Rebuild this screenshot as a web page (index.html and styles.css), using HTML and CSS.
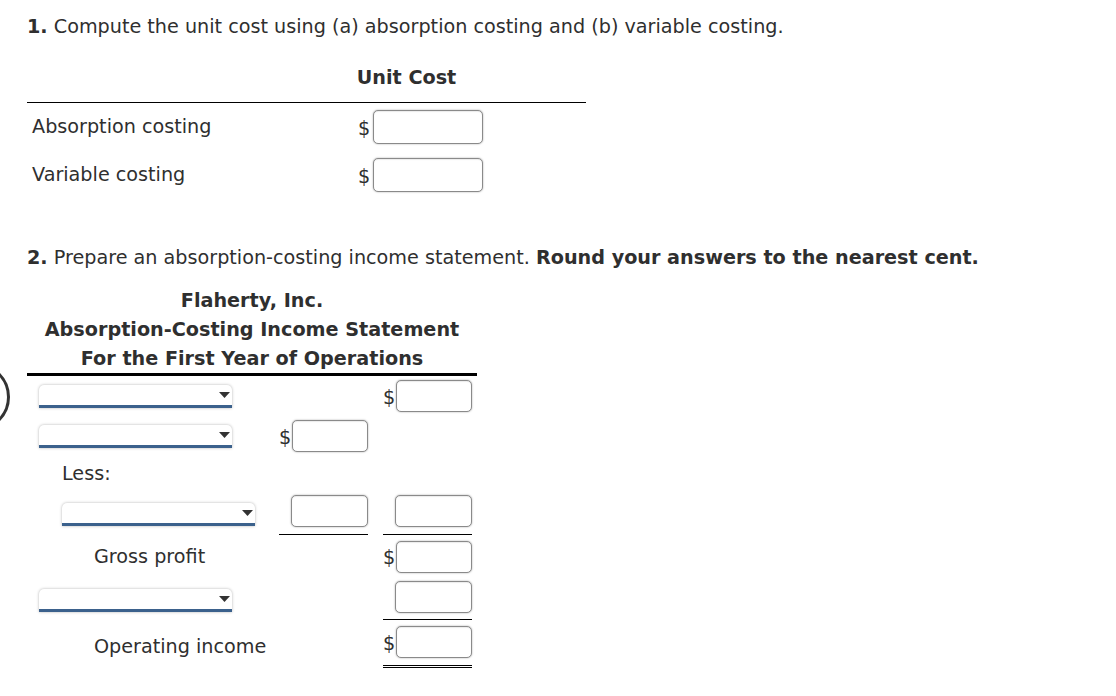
FILE: index.html
```html
<!DOCTYPE html>
<html>
<head>
<meta charset="utf-8">
<link rel="stylesheet" href="styles.css">
</head>
<body>
<div class="page">
  <div class="edge-circle"></div>

  <p class="q q1"><b>1.</b> Compute the unit cost using (a) absorption costing and (b) variable costing.</p>

  <div class="unit-table">
    <div class="ut-head">
      <div class="ut-label"></div>
      <div class="ut-col-title">Unit Cost</div>
    </div>
    <div class="ut-row">
      <div class="ut-label">Absorption costing</div>
      <div class="ut-cell"><span class="dollar">$</span><span class="box box-lg"></span></div>
    </div>
    <div class="ut-row">
      <div class="ut-label">Variable costing</div>
      <div class="ut-cell"><span class="dollar">$</span><span class="box box-lg"></span></div>
    </div>
  </div>

  <p class="q q2"><b>2.</b> Prepare an absorption-costing income statement. <b>Round your answers to the nearest cent.</b></p>

  <div class="statement">
    <div class="st-title">
      <div>Flaherty, Inc.</div>
      <div>Absorption-Costing Income Statement</div>
      <div>For the First Year of Operations</div>
    </div>

    <div class="st-row r1">
      <div class="st-label ind1"><div class="dropdown"><svg class="caret" width="11" height="6" viewBox="0 0 11 6"><path d="M0 0H11L5.5 6Z" fill="#333"/></svg></div></div>
      <div class="st-cell mid"></div>
      <div class="st-cell"><span class="dollar">$</span><span class="box"></span></div>
    </div>

    <div class="st-row r2">
      <div class="st-label ind1"><div class="dropdown"><svg class="caret" width="11" height="6" viewBox="0 0 11 6"><path d="M0 0H11L5.5 6Z" fill="#333"/></svg></div></div>
      <div class="st-cell mid"><span class="dollar">$</span><span class="box"></span></div>
      <div class="st-cell"></div>
    </div>

    <div class="st-row r3">
      <div class="st-label ind2">Less:</div>
      <div class="st-cell mid"></div>
      <div class="st-cell"></div>
    </div>

    <div class="st-row r4">
      <div class="st-label ind2"><div class="dropdown"><svg class="caret" width="11" height="6" viewBox="0 0 11 6"><path d="M0 0H11L5.5 6Z" fill="#333"/></svg></div></div>
      <div class="st-cell mid top ul"><span class="box"></span></div>
      <div class="st-cell top ul"><span class="box"></span></div>
    </div>

    <div class="st-row r5">
      <div class="st-label ind3">Gross profit</div>
      <div class="st-cell mid"></div>
      <div class="st-cell"><span class="dollar">$</span><span class="box"></span></div>
    </div>

    <div class="st-row r6">
      <div class="st-label ind1"><div class="dropdown"><svg class="caret" width="11" height="6" viewBox="0 0 11 6"><path d="M0 0H11L5.5 6Z" fill="#333"/></svg></div></div>
      <div class="st-cell mid"></div>
      <div class="st-cell top ul"><span class="box"></span></div>
    </div>

    <div class="st-row r7">
      <div class="st-label ind3 op">Operating income</div>
      <div class="st-cell mid"></div>
      <div class="st-cell top dbl"><span class="dollar">$</span><span class="box"></span></div>
    </div>
  </div>
</div>
</body>
</html>
```

FILE: styles.css
```css
html, body {
  margin: 0;
  padding: 0;
  background: #fff;
}

body {
  font-family: "DejaVu Sans", Verdana, sans-serif;
  font-size: 19.2px;
  color: #2f2f2f;
  overflow: hidden;
}

.page {
  position: relative;
  width: 1116px;
  height: 696px;
  padding-left: 27px;
  box-sizing: border-box;
}

.edge-circle {
  position: absolute;
  left: -58px;
  top: 363px;
  width: 62px;
  height: 62px;
  border: 3px solid #333;
  border-radius: 50%;
}

.q {
  margin: 0;
  line-height: 24px;
}

.q1 {
  padding-top: 15px;
}

.q2 {
  margin-top: 47px;
}

/* ---------- unit cost table ---------- */
.unit-table {
  width: 559px;
}

.ut-head {
  display: grid;
  grid-template-columns: 300px 159px;
  height: 63px;
  border-bottom: 1px solid #000;
}

.ut-col-title {
  font-weight: bold;
  text-align: center;
  padding-top: 27px;
  line-height: 24px;
}

.ut-row {
  display: grid;
  grid-template-columns: 300px 159px;
  height: 48px;
  align-items: center;
}

.ut-label {
  padding-left: 5px;
  line-height: 24px;
}

.ut-cell {
  display: flex;
  align-items: center;
  padding-left: 31px;
}

.dollar {
  font-size: 19.2px;
  line-height: 24px;
  padding-right: 1px;
  padding-top: 3px;
}

.ut-cell .dollar {
  padding-right: 3px;
}

.box {
  display: block;
  box-sizing: border-box;
  width: 77px;
  height: 32px;
  border: 1px solid #8a8a8a;
  border-radius: 5px;
  background: #fff;
  box-shadow: 0 0 2px rgba(0, 0, 0, 0.35), inset 0 1px 1px rgba(0, 0, 0, 0.08);
}

.box-lg {
  width: 110px;
  height: 34px;
}

/* ---------- statement ---------- */
.statement {
  width: 450px;
  margin-top: 16px;
}

.st-title {
  font-weight: bold;
  text-align: center;
  line-height: 29px;
  border-bottom: 3px solid #000;
}

.st-row {
  display: grid;
  grid-template-columns: 252px 104px 89px;
}

.st-label {
  display: flex;
  align-items: center;
  line-height: 24px;
}

.ind1 { padding-left: 12px; }
.ind2 { padding-left: 35px; }
.ind3 { padding-left: 67px; }

.st-cell {
  display: flex;
  justify-content: flex-end;
  align-items: center;
}

.st-cell.mid {
  margin-right: 15px;
}

.st-cell.top {
  align-items: flex-start;
  padding-top: 3px;
}

.st-cell.ul {
  border-bottom: 1px solid #000;
}

.st-cell.dbl {
  border-bottom: 3px double #000;
  padding-top: 6px;
}

.st-cell.top .dollar {
  padding-top: 6px;
}

.r1 { height: 40px; }
.r2 { height: 40px; }
.r3 { height: 36px; }
.r4 { height: 43px; }
.r5 { height: 43px; }
.r6 { height: 42px; }
.r7 { height: 48px; }

.op {
  padding-top: 6px;
}

.r4 .st-label, .r6 .st-label {
  padding-top: 2px;
}

.dropdown {
  box-sizing: border-box;
  width: 193px;
  height: 23px;
  background: #fff;
  border-radius: 5px 5px 0 0;
  border-bottom: 3px solid #3b618c;
  box-shadow: 0 0 3px rgba(0, 0, 0, 0.3);
  display: flex;
  justify-content: flex-end;
  align-items: center;
  padding-right: 2px;
}

.caret {
  display: block;
}
```
